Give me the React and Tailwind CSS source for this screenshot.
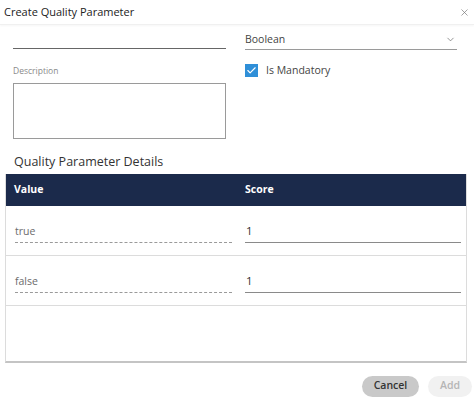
import { ChevronDown, X, Check } from "lucide-react";

const font = { fontFamily: '"Open Sans", "Noto Sans", Arial, sans-serif' };

function Row({ value, score }) {
  return (
    <div className="flex h-[50px] border-b border-[#dcdcdc] pt-[13px]">
      <div className="w-[239px] pl-[9px] pr-[13px]">
        <div className="h-[24px] border-b border-dashed border-[#9a9a9a] text-[10.5px] leading-[24px] text-[#6b6b6b]">
          {value}
        </div>
      </div>
      <div className="flex-1 pr-[5px]">
        <div className="h-[24px] border-b border-[#8a8a8a] pl-[1px] text-[11.5px] leading-[24px] text-[#333]">
          {score}
        </div>
      </div>
    </div>
  );
}

export default function App() {
  return (
    <div className="h-[399px] w-[474px] overflow-hidden bg-white" style={font}>
      {/* header */}
      <div className="flex h-[25px] items-center justify-between border-b border-[#f0f0f0] pl-[4px] pr-[4px] shadow-[0_1px_2px_rgba(0,0,0,0.04)]">
        <span className="text-[11px] text-[#222]">Create Quality Parameter</span>
        <X size={11} strokeWidth={1.5} className="text-[#777]" />
      </div>

      {/* form */}
      <div className="flex gap-[19px] px-[13px]">
        <div className="w-[213px]">
          <div className="h-[24px] border-b border-[#666]" />
          <div className="mt-[16px] text-[8.5px] text-[#8a8a8a]">Description</div>
          <div className="mt-[5px] h-[56px] border border-[#9a9a9a]" />
        </div>
        <div className="w-[212px]">
          <div className="flex h-[25px] items-center justify-between border-b border-[#9a9a9a] pr-[1px] pt-[5px]">
            <span className="text-[10.5px] text-[#444]">Boolean</span>
            <ChevronDown size={11} strokeWidth={1.5} className="text-[#666]" />
          </div>
          <div className="mt-[13px] flex items-center gap-[8px]">
            <span className="flex h-[13px] w-[13px] items-center justify-center bg-[#2f8fd8]">
              <Check size={11} strokeWidth={2.5} className="text-white" />
            </span>
            <span className="text-[10.5px] text-[#444]">Is Mandatory</span>
          </div>
        </div>
      </div>

      {/* details */}
      <div className="mt-[15px] pl-[14px] text-[12.5px] leading-[16px] text-[#333]">
        Quality Parameter Details
      </div>
      <div className="ml-[5px] mt-[4px] w-[462px] border-x border-b-2 border-[#dcdcdc] border-b-[#c4c4c4]">
        <div className="flex h-[32px] items-center bg-[#1b2a4b] text-[10.5px] font-bold text-white">
          <span className="w-[239px] pl-[8px]">Value</span>
          <span>Score</span>
        </div>
        <Row value="true" score="1" />
        <Row value="false" score="1" />
        <div className="h-[55px]" />
      </div>

      {/* footer */}
      <div className="mr-[2px] mt-[13px] flex justify-end gap-[9px]">
        <button className="h-[21px] w-[57px] rounded-full bg-[#c9c9c9] text-[10.5px] font-semibold text-[#333]">
          Cancel
        </button>
        <button className="h-[21px] w-[44px] rounded-full bg-[#f1f1f1] text-[10.5px] font-semibold text-[#b5b5b5]">
          Add
        </button>
      </div>
    </div>
  );
}
